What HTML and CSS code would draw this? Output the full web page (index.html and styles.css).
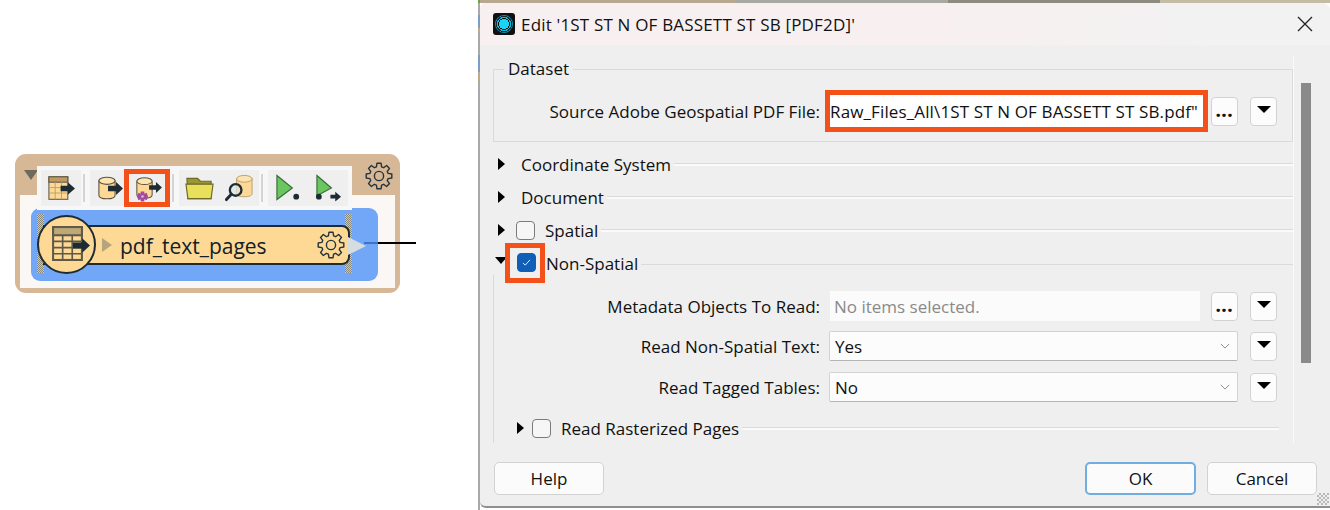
FILE: index.html
```html
<!DOCTYPE html>
<html lang="en">
<head>
  <meta charset="UTF-8" />
  <title>Edit PDF2D reader</title>
  <meta name="viewport" content="width=device-width, initial-scale=1" />
  <link rel="stylesheet" href="styles.css">
</head>
<body>
  <svg class="sprite" width="0" height="0">
    <symbol id="gear" viewBox="-15 -15 30 30">
      <path d="M-2.6-9.1-2-12.8 2-12.8 2.6-9.1 4.6-8.3 7.6-10.5 10.5-7.6 8.3-4.6 9.1-2.6 12.8-2 12.8 2 9.1 2.6 8.3 4.6 10.5 7.6 7.6 10.5 4.6 8.3 2.6 9.1 2 12.8-2 12.8-2.6 9.1-4.6 8.3-7.6 10.5-10.5 7.6-8.3 4.6-9.1 2.6-12.8 2-12.8-2-9.1-2.6-8.3-4.6-10.5-7.6-7.6-10.5-4.6-8.3Z" fill="none" stroke="#25333b" stroke-width="1.4" stroke-linejoin="round"/>
      <circle r="4.6" fill="none" stroke="#25333b" stroke-width="1.4"/>
    </symbol>
    <symbol id="arrow" viewBox="0 0 14 12">
      <path d="M0 3.5H7.5V0L14 6 7.5 12V8.5H0Z" fill="#1d2c33"/>
    </symbol>
    <symbol id="can" viewBox="0 0 20 26">
      <path d="M1 5V21C1 23.5 5 25 10 25S19 23.500 19 21V5Z" fill="#fdd995" stroke="#5b5140" stroke-width="1.200"/>
      <ellipse cx="10" cy="5" rx="9" ry="4" fill="#fde3b2" stroke="#5b5140" stroke-width="1.200"/>
    </symbol>
    <symbol id="grid" viewBox="0 0 30 34">
      <rect x="1" y="1" width="28" height="32" fill="#fdd995" stroke="#5f5a48" stroke-width="2"/>
      <rect x="1" y="1" width="28" height="8" fill="#bda878" stroke="#5f5a48" stroke-width="2"/>
      <path d="M10.300 9V33M19.600 9V33M1 15H29M1 21H29M1 27H29" fill="none" stroke="#5f5a48" stroke-width="1.600"/>
    </symbol>
  </svg>

  <main class="canvas">
    <section class="bookmark">
      <div class="bookmark-head">
        <span class="collapse"></span>
        <svg class="bookmark-gear"><use href="#gear"/></svg>
      </div>
      <div class="bookmark-body">
        <div class="lane">
          <div class="feature">
            <span class="hatch"></span>
            <div class="feature-icon">
              <svg class="feature-grid"><use href="#grid"/></svg>
              <svg class="feature-arrow"><use href="#arrow"/></svg>
            </div>
            <div class="feature-bar">
              <span class="expand"></span>
              <span class="feature-name">pdf_text_pages</span>
              <svg class="feature-gear"><use href="#gear"/></svg>
            </div>
            <span class="hatch"></span>
            <span class="port"></span>
          </div>
        </div>
      </div>
    </section>

    <div class="connector"></div>

    <nav class="toolbar">
      <span class="tool">
        <svg class="ico-table" viewBox="0 0 30 28">
          <rect x="1" y="1" width="21" height="25" fill="#fdd995" stroke="#5f5a48" stroke-width="1.200"/>
          <rect x="1" y="1" width="21" height="6" fill="#c09a62" stroke="#5f5a48" stroke-width="1.200"/>
          <path d="M8 7V26M15 7V26M1 13H22M1 19H22" stroke="#b99c68" stroke-width="1"/>
          <path d="M14 11H22V7L30 14 22 21V17H14Z" fill="#1d2c33"/>
        </svg>
      </span>
      <span class="tool-sep"></span>
      <span class="tool tool-wide">
        <svg class="ico-can"><use href="#can"/></svg>
        <svg class="ico-arrow"><use href="#arrow"/></svg>
      </span>
      <span class="tool tool-marked">
        <svg class="ico-can"><use href="#can"/></svg>
        <svg class="ico-arrow"><use href="#arrow"/></svg>
        <svg class="ico-flower" viewBox="0 0 12 12">
          <path d="M4 .5H8V3L10.500 2 12 6 10.500 10 8 9V11.500H4V9L1.500 10 0 6 1.500 2 4 3Z" fill="#a24a9c"/>
          <circle cx="6" cy="6" r="1.400" fill="#e5b7dd"/>
        </svg>
      </span>
      <span class="tool-sep"></span>
      <span class="tool">
        <svg class="ico-folder" viewBox="0 0 30 26">
          <path d="M3 24 2 3H13L16 6H27V24Z" fill="#9c9530" stroke="#6e6a2a" stroke-width="1.200"/>
          <path d="M3 24 1 9H29L27 24Z" fill="#e8e05a" stroke="#6e6a2a" stroke-width="1.200"/>
        </svg>
      </span>
      <span class="tool">
        <svg class="ico-search" viewBox="0 0 30 28">
          <path d="M12 4V20C12 22 15.500 23 20 23S28 22 28 20V4Z" fill="#fdd995" stroke="#b6a070" stroke-width="1"/>
          <ellipse cx="20" cy="4.500" rx="8" ry="3.500" fill="#fde3b2" stroke="#b6a070" stroke-width="1"/>
          <circle cx="11" cy="16" r="6" fill="#dfe4e4" fill-opacity=".7" stroke="#1d2c33" stroke-width="2.400"/>
          <path d="M6.500 20.500 1.500 26" stroke="#1d2c33" stroke-width="3" stroke-linecap="round"/>
        </svg>
      </span>
      <span class="tool-sep"></span>
      <span class="tool tool-run">
        <svg class="ico-run" viewBox="0 0 28 28">
          <path d="M2 1 18 14 2 26Z" fill="#6cc65f" stroke="#3b6b3d" stroke-width="1.200"/>
          <circle cx="22" cy="23" r="3" fill="#1d2c33"/>
        </svg>
        <svg class="ico-run-to" viewBox="0 0 28 28">
          <path d="M2 1 17 14 2 22Z" fill="#6cc65f" stroke="#3b6b3d" stroke-width="1.200"/>
          <circle cx="4" cy="23" r="3" fill="#1d2c33"/>
          <path d="M16 21H21V18L27 23 21 28V25H16Z" fill="#1d2c33"/>
        </svg>
      </span>
    </nav>
  </main>

  <div class="desktop">
    <div class="dialog">
      <header class="titlebar">
        <span class="app-icon"><span class="app-ring"></span></span>
        <span class="dialog-title">Edit '1ST ST N OF BASSETT ST SB [PDF2D]'</span>
        <svg class="close" viewBox="0 0 16 16"><path d="M1 1 15 15M15 1 1 15" stroke="#222" stroke-width="1.300"/></svg>
      </header>

      <div class="scroll-area">
        <div class="params">
          <fieldset class="dataset">
            <legend>Dataset</legend>
            <div class="form-row form-row-source">
              <label>Source Adobe Geospatial PDF File:</label>
              <div class="field-with-btn">
                <div class="source-input"><span>Raw_Files_All\1ST ST N OF BASSETT ST SB.pdf"</span></div>
                <button class="mini-btn">...</button>
              </div>
              <button class="mini-btn menu-btn"><i></i></button>
            </div>
          </fieldset>

          <div class="section"><span class="tri"></span><span class="section-name">Coordinate System</span><span class="rule"></span></div>
          <div class="section"><span class="tri"></span><span class="section-name">Document</span><span class="rule"></span></div>
          <div class="section"><span class="tri"></span><span class="check"></span><span class="section-name">Spatial</span><span class="rule"></span></div>
          <div class="section section-open">
            <span class="tri tri-down"></span>
            <span class="check check-on">
              <svg viewBox="0 0 10 8"><path d="M1 4.500 3.500 7 9 1" fill="none" stroke="#fff" stroke-width="1"/></svg>
              <span class="check-mark"></span>
            </span>
            <span class="section-name">Non-Spatial</span><span class="rule rule-dark"></span>
          </div>

          <div class="nested">
            <div class="form-row">
              <label>Metadata Objects To Read:</label>
              <div class="field-with-btn field-with-btn-gap">
                <div class="list-input">No items selected.</div>
                <button class="mini-btn">...</button>
              </div>
              <button class="mini-btn menu-btn"><i></i></button>
            </div>
            <div class="form-row">
              <label>Read Non-Spatial Text:</label>
              <div class="select"><span>Yes</span><svg viewBox="0 0 12 7"><path d="M1 1 6 6 11 1" fill="none" stroke="#777" stroke-width="1"/></svg></div>
              <button class="mini-btn menu-btn"><i></i></button>
            </div>
            <div class="form-row">
              <label>Read Tagged Tables:</label>
              <div class="select"><span>No</span><svg viewBox="0 0 12 7"><path d="M1 1 6 6 11 1" fill="none" stroke="#777" stroke-width="1"/></svg></div>
              <button class="mini-btn menu-btn"><i></i></button>
            </div>
            <div class="section section-sub"><span class="tri"></span><span class="check"></span><span class="section-name">Read Rasterized Pages</span><span class="rule"></span></div>
          </div>
        </div>
        <div class="scrollbar"><span class="thumb"></span></div>
      </div>

      <footer class="footer">
        <button class="btn">Help</button>
        <span class="spacer"></span>
        <button class="btn btn-default">OK</button>
        <button class="btn">Cancel</button>
      </footer>
      <span class="grip"></span>
    </div>
  </div>
</body>
</html>
```

FILE: styles.css
```css
:root {
  --tan: #d6b896;
  --orange: #f4511a;
  --ink: #1d2c33;
  --panel: #efefef;
  --line: #dadada;
}
* { box-sizing: border-box; }
html, body { height: 100%; }
body {
  margin: 0;
  height: 510px;
  overflow: hidden;
  display: flex;
  background: #fff;
  font-family: 'Open Sans', 'Noto Sans', Arial, sans-serif;
  color: #111;
}
.sprite { position: absolute; }

/* workspace on the left */
.canvas {
  width: 478px;
  flex: none;
  position: relative;
}
.bookmark {
  position: absolute;
  left: 15px;
  top: 154px;
  width: 385px;
  height: 139px;
  background: var(--tan);
  border-radius: 11px;
  padding: 0 5px 5px 5px;
  display: flex;
  flex-direction: column;
}
.bookmark-head {
  height: 41px;
  flex: none;
  display: flex;
  justify-content: space-between;
  align-items: flex-start;
  padding: 7px 1px 0 4px;
}
.collapse {
  width: 0;
  height: 0;
  margin-top: 9px;
  border-left: 7px solid transparent;
  border-right: 7px solid transparent;
  border-top: 10px solid #6f6a5c;
}
.bookmark-gear { width: 30px; height: 30px; margin-top: 0; }
.bookmark-body {
  flex: 1;
  background: #fbf7f5;
  padding: 13px 17px 7px 11px;
}
.lane {
  height: 73px;
  background: #72a7f7;
  border-radius: 9px;
  padding: 6px 0 0 6px;
}
.feature {
  position: relative;
  display: flex;
  height: 59px;
  width: 315px;
}
.hatch {
  flex: none;
  width: 7px;
  height: 59px;
  background-image: conic-gradient(#8b8672 25%, #c9c9c0 0 50%, #8b8672 0 75%, #c9c9c0 0);
  background-size: 2px 2px;
}
.feature-icon {
  position: absolute;
  left: 0;
  top: 1px;
  width: 59px;
  height: 59px;
  background: #fdd995;
  border: 2.5px solid var(--ink);
  border-radius: 50%;
  z-index: 2;
}
.feature-grid { position: absolute; left: 13px; top: 9px; width: 31px; height: 35px; }
.feature-arrow { position: absolute; left: 34px; top: 21px; width: 17px; height: 15px; }
.feature-bar {
  position: relative;
  z-index: 1;
  flex: 1;
  height: 40px;
  margin-top: 11px;
  margin-left: -1px;
  margin-right: -5px;
  background: #fdd995;
  border: 2px solid var(--ink);
  border-left: none;
  border-radius: 0 8px 8px 0;
  display: flex;
  align-items: center;
  padding-left: 59px;
}
.expand {
  width: 0;
  height: 0;
  border-top: 7px solid transparent;
  border-bottom: 7px solid transparent;
  border-left: 10px solid #b5a57c;
  margin-right: 8px;
}
.feature-name {
  font-family: 'Open Sans', sans-serif;
  font-size: 21px;
  color: #10202a;
  margin-top: 1px;
}
.feature-gear { width: 30px; height: 30px; margin-left: auto; margin-right: 2px; }
.port {
  position: absolute;
  right: -14px;
  top: 23px;
  width: 0;
  height: 0;
  border-top: 9px solid transparent;
  border-bottom: 9px solid transparent;
  border-left: 18px solid #d5dde0;
  z-index: 2;
}
.connector {
  position: absolute;
  left: 364px;
  top: 242px;
  width: 52px;
  height: 2px;
  background: linear-gradient(90deg, #3f74c4 0 14px, #000 14px);
}
.toolbar {
  position: absolute;
  left: 37px;
  top: 166px;
  width: 315px;
  height: 44px;
  background: #f7f7f7;
  display: flex;
  align-items: stretch;
  padding: 4px 0 4px 4px;
}
.tool {
  position: relative;
  width: 40px;
  background: #efefef;
  display: flex;
  align-items: center;
  justify-content: center;
}
.tool-wide { width: 34px; justify-content: flex-start; padding-left: 8px; }
.tool-marked {
  width: 46px;
  margin: -1px 0;
  border: 5px solid var(--orange);
  justify-content: flex-start;
  padding-left: 7px;
}
.tool-sep {
  width: 2px;
  margin: 4px 5px 4px 2px;
  background: #d4d4d4;
}
.tool-run { width: 80px; gap: 13px; }
.ico-table { width: 27px; height: 27px; }
.ico-can { width: 18px; height: 26px; flex: none; }
.ico-arrow { width: 15px; height: 13px; flex: none; margin-left: -8px; }
.tool-marked .ico-can { width: 17px; height: 24px; }
.tool-marked .ico-arrow { width: 13px; height: 11px; margin-top: -2px; margin-left: -4px; }
.ico-flower { position: absolute; left: 8px; top: 17px; width: 11px; height: 11px; }
.ico-folder { width: 29px; height: 26px; }
.ico-search { width: 29px; height: 28px; }
.ico-run { width: 27px; height: 28px; }
.ico-run-to { width: 27px; height: 28px; }

/* dialog */
.desktop {
  flex: 1;
  padding-top: 3px;
  background: linear-gradient(90deg, #b8a98e 0 30%, #a9a9a4 30% 55%, #8d8b80 55% 80%, #c4bda4 80%) top / 100% 3px no-repeat;
  border-left: 2px solid #a9a9a9;
  border-image: linear-gradient(#6fa04e 0 5px, #a9a9a9 5px 17px, #7e9cc8 17px 30px, #c0aa88 30px 34px, #a9a9a9 34px 57px, #7e9cc8 57px 73px, #c0aa88 73px 82px, #a9a9a9 82px) 2;
}
.dialog {
  position: relative;
  height: 505px;
  background: var(--panel);
  border-bottom: 2px solid #8f8f8f;
  border-radius: 6px 8px 0 6px;
  display: flex;
  flex-direction: column;
}
.titlebar {
  height: 42px;
  flex: none;
  display: flex;
  align-items: center;
  padding: 0 17px 0 13px;
  background: linear-gradient(90deg, #f8eff0 0, #f8f0f0 55%, #f2f2f2 85%);
  border-radius: 6px 8px 0 0;
}
.app-icon {
  width: 22px;
  height: 22px;
  background: #111;
  border-radius: 3px;
  display: flex;
  align-items: center;
  justify-content: center;
  flex: none;
}
.app-ring {
  width: 18px;
  height: 18px;
  border-radius: 50%;
  background: radial-gradient(circle, #19d5f5 0 5px, #111 5px 6px, #19b8dc 6px 7px, #0f2a33 7px 8px, #1390b0 8px);
}
.dialog-title {
  margin-left: 6px;
  font-size: 17px;
  letter-spacing: 0.18px;
}
.close { width: 16px; height: 16px; margin-left: auto; }

.scroll-area {
  height: 386px;
  flex: none;
  margin-top: 12px;
  display: flex;
}
.params {
  width: 814px;
  flex: none;
  padding-left: 13px;
  border-right: 1px solid #fafafa;
  overflow: hidden;
}
label, .section-name, .dataset legend, .list-input, .select, .source-input, .btn {
  font-size: 17px;
}
.dataset {
  margin: 0;
  height: 85px;
  padding: 0;
  border: 1px solid var(--line);
  position: relative;
}
.dataset legend {
  margin-left: 10px;
  padding: 0 4px;
  line-height: 24px;
}
.form-row {
  display: grid;
  grid-template-columns: 326px 409px 27px;
  column-gap: 9px;
  align-items: center;
  height: 30px;
  margin-bottom: 10px;
}
.form-row-source {
  height: 42px;
  margin: 9px 0 0 0;
}
.form-row label { text-align: right; }
.form-row .menu-btn { margin-left: 3px; }
.field-with-btn { display: flex; align-items: center; }
.field-with-btn-gap { gap: 11px; }
.source-input {
  flex: 1;
  height: 42px;
  margin-left: -4px;
  margin-right: 3px;
  min-width: 0;
  background: #fff;
  border: 5px solid var(--orange);
  display: flex;
  align-items: center;
  justify-content: flex-end;
  padding-right: 5px;
  white-space: nowrap;
  letter-spacing: 0.13px;
}
.mini-btn {
  width: 27px;
  height: 29px;
  flex: none;
  background: #fcfcfc;
  border: 1px solid #d2d2d2;
  border-radius: 4px;
  padding: 0;
  font: 800 17px 'Open Sans', sans-serif;
  letter-spacing: 1px;
  color: #111;
  line-height: 18px;
}
.menu-btn {
  display: flex;
  align-items: center;
  justify-content: center;
}
.menu-btn i {
  display: block;
  margin-top: -3px;
  width: 0;
  height: 0;
  border-left: 7px solid transparent;
  border-right: 7px solid transparent;
  border-top: 7px solid #000;
}
.section {
  display: flex;
  align-items: center;
  height: 33px;
  padding-left: 5px;
}
.dataset + .section { margin-top: 6px; }
.tri {
  width: 0;
  height: 0;
  flex: none;
  border-top: 6px solid transparent;
  border-bottom: 6px solid transparent;
  border-left: 7px solid #000;
  margin-right: 16px;
  margin-top: -2px;
}
.tri-down {
  border-left: 6px solid transparent;
  border-right: 6px solid transparent;
  border-top: 7px solid #000;
  border-bottom: none;
  margin-right: 7px;
  margin-left: -3px;
  margin-top: -6px;
}
.section .check { margin-left: -5px; margin-right: 10px; }
.section-open .check { margin-left: 3px; margin-top: -3px; }
.check {
  position: relative;
  width: 19px;
  height: 19px;
  flex: none;
  border: 1px solid #7b7b7b;
  border-radius: 4px;
  background: #f6f6f6;
}
.check-on {
  background: #0f5fb8;
  border-color: #0f5fb8;
  display: flex;
  align-items: center;
  justify-content: center;
}
.check-on svg { width: 9px; height: 7px; }
.check-mark {
  position: absolute;
  left: -13px;
  top: -11px;
  width: 40px;
  height: 40px;
  border: 5px solid var(--orange);
}
.rule {
  flex: 1;
  height: 3px;
  margin-left: 3px;
  border-top: 1px solid var(--line);
  background: #fafafa;
  border-bottom: 1px solid #fafafa;
}
.rule-dark { background: none; border-bottom: none; height: 1px; margin-top: 2px; }
.nested {
  height: 172px;
  margin-top: -5px;
  padding-top: 16px;
  border-left: 1px solid var(--line);
}
.nested .form-row:nth-child(2) { margin-bottom: 11px; }
.list-input {
  flex: 1;
  height: 30px;
  margin-left: 1px;
  background: #fbfbfb;
  color: #8a8a8a;
  display: flex;
  align-items: center;
  padding-left: 4px;
}
.select {
  height: 30px;
  background: #fcfcfc;
  border: 1px solid #d2d2d2;
  border-bottom-color: #b5b5b5;
  border-radius: 2px;
  display: flex;
  align-items: center;
  justify-content: space-between;
  padding: 0 7px 0 5px;
}
.select svg { width: 10px; height: 6px; }
.section-sub {
  padding-left: 23px;
  margin-top: 8px;
  padding-right: 14px;
}
.section-sub .tri { margin-right: 8px; }
.section-sub .check { margin-left: 0; }
.scrollbar {
  flex: 1;
  padding: 26px 0 0 7px;
}
.thumb {
  display: block;
  width: 10px;
  height: 280px;
  background: #8a8a8a;
}
.footer {
  display: flex;
  align-items: flex-start;
  gap: 11px;
  padding: 19px 14px 0 14px;
}
.spacer { flex: 1; }
.btn {
  width: 110px;
  height: 33px;
  background: #fbfbfb;
  border: 1px solid #d2d2d2;
  border-radius: 5px;
  font-family: inherit;
  color: #111;
  padding: 0;
}
.btn-default {
  width: 111px;
  border: 2px solid #72addf;
}
.footer .btn:last-child { margin-right: -1px; }
.grip {
  position: absolute;
  right: 1px;
  bottom: 1px;
  width: 12px;
  height: 12px;
  background-image: conic-gradient(#b9b9b9 25%, transparent 0 50%, #b9b9b9 0 75%, transparent 0);
  background-size: 4px 4px;
}
```
